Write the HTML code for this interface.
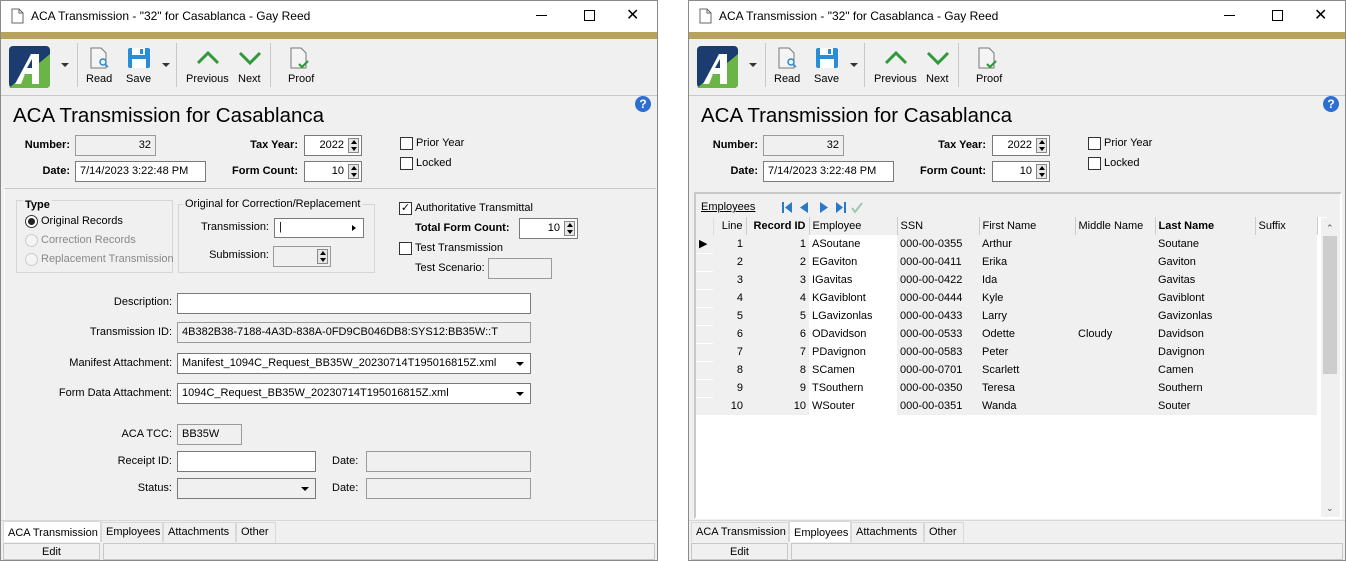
<!DOCTYPE html>
<html><head><style>
*{box-sizing:border-box;margin:0;padding:0}
body{width:1346px;height:561px;background:#fff;font-family:"Liberation Sans",sans-serif;font-size:11px;color:#000;position:relative;overflow:hidden}
.win{position:absolute;top:0;width:658px;height:561px;background:#f0f0f0;border:1px solid #8a8a8a;overflow:hidden}
.a{position:absolute;white-space:nowrap}
.title{left:0;top:0;width:656px;height:31px;background:#fff}
.gold{left:0;top:31px;width:656px;height:7px;background:#b8a35e}
.sep{width:1px;height:44px;top:42px;background:#c8c8c8}
.r{text-align:right}
.in{background:#fff;border:1px solid #7a7a7a;height:21px;padding:3px 4px}
.ro{background:#f0f0f0;border:1px solid #9a9a9a;height:21px;padding:3px 4px}
.spin{position:absolute;right:2px;top:2px;width:11px;height:15px;border:1px solid #888;background:#e6e6e6}
.spin:before{content:"";position:absolute;left:2px;top:1px;border-left:3px solid transparent;border-right:3px solid transparent;border-bottom:4px solid #000}
.spin:after{content:"";position:absolute;left:2px;bottom:1px;border-left:3px solid transparent;border-right:3px solid transparent;border-top:4px solid #000}
.cb{width:13px;height:13px;border:1px solid #333;background:#fff}
.dd:after{content:"";position:absolute;right:6px;top:8px;border-left:4px solid transparent;border-right:4px solid transparent;border-top:4px solid #000}
.tab{top:521px;height:20px;padding:3px 4px;border:1px solid #d8d8d8;border-bottom:none;background:#f0f0f0;overflow:hidden}
.grid td{height:18px;padding:0 3px;font-size:11px;white-space:nowrap;overflow:hidden}
</style></head><body>

<!-- LEFT WINDOW -->
<div class="win" style="left:0">
 <div class="a title"></div>
 <svg class="a" style="left:10px;top:7px" width="13" height="16"><path d="M1 1h7l4 4v10H1z" fill="#fff" stroke="#666"/><path d="M8 1v4h4" fill="none" stroke="#666"/></svg>
 <div class="a" style="left:30px;top:8px;font-size:12px">ACA Transmission - "32" for Casablanca - Gay Reed</div>
 <div class="a" style="left:535px;top:14px;width:11px;height:1px;background:#000"></div>
 <div class="a" style="left:583px;top:9px;width:11px;height:11px;border:1px solid #000"></div>
 <div class="a" style="left:625px;top:4px;font-size:16px">✕</div>
 <div class="a gold"></div>
 <svg class="a" style="left:8px;top:45px" width="41" height="42"><rect width="41" height="42" rx="4" fill="#1c3b6e"/><path d="M0 42 L41 8 V38 Q41 42 37 42Z" fill="#6bb548"/><path d="M6 38 L22 8 L30 8 L30 38 L23 38 L23 28 L16 28 L12 38Z M18 22 L23 22 L23 13Z" fill="#fff"/></svg>
 <div class="a" style="left:60px;top:62px;border-left:4px solid transparent;border-right:4px solid transparent;border-top:4px solid #333"></div>
 <div class="a sep" style="left:76px"></div>
 <svg class="a" style="left:89px;top:46px" width="20" height="22"><path d="M1 1h10l5 5v15H1z" fill="#f4f4f4" stroke="#777"/><circle cx="13" cy="15" r="3" fill="none" stroke="#2a8ad4" stroke-width="1.5"/><path d="M15 17l3 3" stroke="#2a8ad4" stroke-width="1.5"/></svg>
 <div class="a" style="left:85px;top:72px">Read</div>
 <svg class="a" style="left:126px;top:46px" width="24" height="22"><rect x="1" y="1" width="22" height="20" rx="2" fill="#2b8cd6"/><rect x="5" y="1" width="13" height="7" fill="#fff"/><rect x="13" y="2" width="3" height="5" fill="#2b8cd6"/><rect x="5" y="12" width="14" height="9" fill="#fff"/></svg>
 <div class="a" style="left:125px;top:72px">Save</div>
 <div class="a" style="left:161px;top:62px;border-left:4px solid transparent;border-right:4px solid transparent;border-top:4px solid #333"></div>
 <div class="a sep" style="left:175px"></div>
 <svg class="a" style="left:195px;top:50px" width="24" height="14"><path d="M2 12L12 2L22 12" fill="none" stroke="#2e9a3a" stroke-width="3"/></svg>
 <div class="a" style="left:185px;top:72px">Previous</div>
 <svg class="a" style="left:237px;top:50px" width="24" height="14"><path d="M2 2L12 12L22 2" fill="none" stroke="#2e9a3a" stroke-width="3"/></svg>
 <div class="a" style="left:237px;top:72px">Next</div>
 <div class="a sep" style="left:269px"></div>
 <svg class="a" style="left:289px;top:46px" width="22" height="24"><path d="M1 1h10l5 5v15H1z" fill="#f4f4f4" stroke="#777"/><path d="M9 17l3 3l6-6" fill="none" stroke="#2e9a3a" stroke-width="2.2"/></svg>
 <div class="a" style="left:287px;top:72px">Proof</div>
 <div class="a" style="left:0;top:94px;width:656px;height:1px;background:#c8c8c8"></div>
 <div class="a" style="left:12px;top:103px;font-size:20.5px">ACA Transmission for Casablanca</div>
 <div class="a" style="left:634px;top:95px;width:16px;height:16px;border-radius:50%;background:#2d6fd0;color:#fff;font-weight:bold;font-size:12px;text-align:center;line-height:16px">?</div>

 <div class="a r" style="left:0;width:69px;top:138px;font-weight:bold">Number:</div>
 <div class="a ro r" style="left:74px;top:134px;width:81px">32</div>
 <div class="a r" style="left:0;width:69px;top:164px;font-weight:bold">Date:</div>
 <div class="a in" style="left:74px;top:160px;width:131px">7/14/2023 3:22:48 PM</div>
 <div class="a r" style="left:200px;width:97px;top:138px;font-weight:bold">Tax Year:</div>
 <div class="a in r" style="left:303px;top:134px;width:58px;padding-right:17px">2022<div class="spin"></div></div>
 <div class="a r" style="left:200px;width:97px;top:164px;font-weight:bold">Form Count:</div>
 <div class="a in r" style="left:303px;top:160px;width:58px;padding-right:17px">10<div class="spin"></div></div>
 <div class="a cb" style="left:399px;top:136px"></div><div class="a" style="left:415px;top:136px">Prior Year</div>
 <div class="a cb" style="left:399px;top:156px"></div><div class="a" style="left:415px;top:156px">Locked</div>

 <div class="a" style="left:3px;top:187px;width:652px;height:333px;border-top:1px solid #c8c8c8;border-left:1px solid #fff"></div>
 <div class="a" style="left:15px;top:199px;width:157px;height:73px;border:1px solid #d6d6d6"></div>
 <div class="a" style="left:22px;top:198px;font-weight:bold;background:#f0f0f0;padding:0 2px">Type</div>
 <div class="a" style="left:24px;top:214px;width:13px;height:13px;border-radius:50%;border:1px solid #333;background:#fff"><div style="margin:2px;width:7px;height:7px;border-radius:50%;background:#222"></div></div>
 <div class="a" style="left:40px;top:214px">Original Records</div>
 <div class="a" style="left:24px;top:233px;width:13px;height:13px;border-radius:50%;border:1px solid #ccc;background:#f4f4f4"></div>
 <div class="a" style="left:40px;top:233px;color:#888">Correction Records</div>
 <div class="a" style="left:24px;top:252px;width:13px;height:13px;border-radius:50%;border:1px solid #ccc;background:#f4f4f4"></div>
 <div class="a" style="left:40px;top:252px;color:#888">Replacement Transmission</div>
 <div class="a" style="left:177px;top:203px;width:197px;height:69px;border:1px solid #d6d6d6"></div>
 <div class="a" style="left:182px;top:197px;background:#f0f0f0;padding:0 2px">Original for Correction/Replacement</div>
 <div class="a r" style="left:180px;width:88px;top:220px">Transmission:</div>
 <div class="a in" style="left:273px;top:217px;width:90px;height:20px;padding-top:2px">|<div style="position:absolute;right:7px;top:6px;border-top:3px solid transparent;border-bottom:3px solid transparent;border-left:4px solid #000"></div></div>
 <div class="a r" style="left:180px;width:88px;top:248px">Submission:</div>
 <div class="a ro" style="left:272px;top:245px;width:58px;height:21px"><div class="spin"></div></div>
 <div class="a cb" style="left:398px;top:201px;font-size:11px;line-height:11px;text-align:center">✓</div><div class="a" style="left:414px;top:201px">Authoritative Transmittal</div>
 <div class="a" style="left:414px;top:221px;font-weight:bold">Total Form Count:</div>
 <div class="a in r" style="left:518px;top:217px;width:59px;padding-right:17px">10<div class="spin"></div></div>
 <div class="a cb" style="left:398px;top:241px"></div><div class="a" style="left:414px;top:241px">Test Transmission</div>
 <div class="a" style="left:414px;top:261px">Test Scenario:</div>
 <div class="a ro" style="left:487px;top:257px;width:64px"></div>

 <div class="a r" style="left:0;width:171px;top:295px">Description:</div>
 <div class="a in" style="left:176px;top:292px;width:354px"></div>
 <div class="a r" style="left:0;width:171px;top:325px">Transmission ID:</div>
 <div class="a ro" style="left:176px;top:321px;width:354px">4B382B38-7188-4A3D-838A-0FD9CB046DB8:SYS12:BB35W::T</div>
 <div class="a r" style="left:0;width:171px;top:356px">Manifest Attachment:</div>
 <div class="a in dd" style="left:176px;top:352px;width:354px">Manifest_1094C_Request_BB35W_20230714T195016815Z.xml</div>
 <div class="a r" style="left:0;width:171px;top:386px">Form Data Attachment:</div>
 <div class="a in dd" style="left:176px;top:382px;width:354px">1094C_Request_BB35W_20230714T195016815Z.xml</div>
 <div class="a r" style="left:0;width:171px;top:427px">ACA TCC:</div>
 <div class="a ro" style="left:176px;top:423px;width:65px">BB35W</div>
 <div class="a r" style="left:0;width:171px;top:454px">Receipt ID:</div>
 <div class="a in" style="left:176px;top:450px;width:139px"></div>
 <div class="a" style="left:331px;top:454px">Date:</div>
 <div class="a ro" style="left:365px;top:450px;width:165px"></div>
 <div class="a r" style="left:0;width:171px;top:481px">Status:</div>
 <div class="a in dd" style="left:176px;top:477px;width:139px;background:#f0f0f0"></div>
 <div class="a" style="left:331px;top:481px">Date:</div>
 <div class="a ro" style="left:365px;top:477px;width:165px"></div>

 <div class="a" style="left:0;top:519px;width:656px;height:1px;background:#d8d8d8"></div>
 <div class="a tab" style="left:2px;width:98px;background:#fff;top:520px;height:21px;padding-top:5px">ACA Transmission</div>
 <div class="a tab" style="left:100px;width:62px">Employees</div>
 <div class="a tab" style="left:162px;width:73px">Attachments</div>
 <div class="a tab" style="left:235px;width:40px">Other</div>
 <div class="a" style="left:2px;top:542px;width:97px;height:17px;border:1px solid #c8c8c8;text-align:center;padding-top:2px">Edit</div>
 <div class="a" style="left:102px;top:542px;width:552px;height:17px;border:1px solid #c8c8c8"></div>
</div>

<!-- RIGHT WINDOW -->
<div class="win" style="left:688px">
 <div class="a title"></div>
 <svg class="a" style="left:10px;top:7px" width="13" height="16"><path d="M1 1h7l4 4v10H1z" fill="#fff" stroke="#666"/><path d="M8 1v4h4" fill="none" stroke="#666"/></svg>
 <div class="a" style="left:30px;top:8px;font-size:12px">ACA Transmission - "32" for Casablanca - Gay Reed</div>
 <div class="a" style="left:535px;top:14px;width:11px;height:1px;background:#000"></div>
 <div class="a" style="left:583px;top:9px;width:11px;height:11px;border:1px solid #000"></div>
 <div class="a" style="left:625px;top:4px;font-size:16px">✕</div>
 <div class="a gold"></div>
 <svg class="a" style="left:8px;top:45px" width="41" height="42"><rect width="41" height="42" rx="4" fill="#1c3b6e"/><path d="M0 42 L41 8 V38 Q41 42 37 42Z" fill="#6bb548"/><path d="M6 38 L22 8 L30 8 L30 38 L23 38 L23 28 L16 28 L12 38Z M18 22 L23 22 L23 13Z" fill="#fff"/></svg>
 <div class="a" style="left:60px;top:62px;border-left:4px solid transparent;border-right:4px solid transparent;border-top:4px solid #333"></div>
 <div class="a sep" style="left:76px"></div>
 <svg class="a" style="left:89px;top:46px" width="20" height="22"><path d="M1 1h10l5 5v15H1z" fill="#f4f4f4" stroke="#777"/><circle cx="13" cy="15" r="3" fill="none" stroke="#2a8ad4" stroke-width="1.5"/><path d="M15 17l3 3" stroke="#2a8ad4" stroke-width="1.5"/></svg>
 <div class="a" style="left:85px;top:72px">Read</div>
 <svg class="a" style="left:126px;top:46px" width="24" height="22"><rect x="1" y="1" width="22" height="20" rx="2" fill="#2b8cd6"/><rect x="5" y="1" width="13" height="7" fill="#fff"/><rect x="13" y="2" width="3" height="5" fill="#2b8cd6"/><rect x="5" y="12" width="14" height="9" fill="#fff"/></svg>
 <div class="a" style="left:125px;top:72px">Save</div>
 <div class="a" style="left:161px;top:62px;border-left:4px solid transparent;border-right:4px solid transparent;border-top:4px solid #333"></div>
 <div class="a sep" style="left:175px"></div>
 <svg class="a" style="left:195px;top:50px" width="24" height="14"><path d="M2 12L12 2L22 12" fill="none" stroke="#2e9a3a" stroke-width="3"/></svg>
 <div class="a" style="left:185px;top:72px">Previous</div>
 <svg class="a" style="left:237px;top:50px" width="24" height="14"><path d="M2 2L12 12L22 2" fill="none" stroke="#2e9a3a" stroke-width="3"/></svg>
 <div class="a" style="left:237px;top:72px">Next</div>
 <div class="a sep" style="left:269px"></div>
 <svg class="a" style="left:289px;top:46px" width="22" height="24"><path d="M1 1h10l5 5v15H1z" fill="#f4f4f4" stroke="#777"/><path d="M9 17l3 3l6-6" fill="none" stroke="#2e9a3a" stroke-width="2.2"/></svg>
 <div class="a" style="left:287px;top:72px">Proof</div>
 <div class="a" style="left:0;top:94px;width:656px;height:1px;background:#c8c8c8"></div>
 <div class="a" style="left:12px;top:103px;font-size:20.5px">ACA Transmission for Casablanca</div>
 <div class="a" style="left:634px;top:95px;width:16px;height:16px;border-radius:50%;background:#2d6fd0;color:#fff;font-weight:bold;font-size:12px;text-align:center;line-height:16px">?</div>

 <div class="a r" style="left:0;width:69px;top:138px;font-weight:bold">Number:</div>
 <div class="a ro r" style="left:74px;top:134px;width:81px">32</div>
 <div class="a r" style="left:0;width:69px;top:164px;font-weight:bold">Date:</div>
 <div class="a in" style="left:74px;top:160px;width:131px">7/14/2023 3:22:48 PM</div>
 <div class="a r" style="left:200px;width:97px;top:138px;font-weight:bold">Tax Year:</div>
 <div class="a in r" style="left:303px;top:134px;width:58px;padding-right:17px">2022<div class="spin"></div></div>
 <div class="a r" style="left:200px;width:97px;top:164px;font-weight:bold">Form Count:</div>
 <div class="a in r" style="left:303px;top:160px;width:58px;padding-right:17px">10<div class="spin"></div></div>
 <div class="a cb" style="left:399px;top:136px"></div><div class="a" style="left:415px;top:136px">Prior Year</div>
 <div class="a cb" style="left:399px;top:156px"></div><div class="a" style="left:415px;top:156px">Locked</div>

 <div class="a" style="left:5px;top:191px;width:648px;height:327px;border:2px solid #c8c8c8;border-right-color:#fff;border-bottom-color:#fff"></div>
 <div class="a" style="left:12px;top:200px;text-decoration:underline;text-decoration-thickness:1px">Employees</div>
 <svg class="a" style="left:92px;top:200px" width="90" height="13">
  <rect x="1" y="1" width="2" height="11" fill="#2a78c8"/><path d="M11 1L4 6.5L11 12Z" fill="#2a78c8"/>
  <path d="M27 1L19 6.5L27 12Z" fill="#2a78c8"/>
  <path d="M39 1L47 6.5L39 12Z" fill="#2a78c8"/>
  <path d="M55 1L62 6.5L55 12Z" fill="#2a78c8"/><rect x="63" y="1" width="2" height="11" fill="#2a78c8"/>
  <path d="M71 7l3 4l7-9" fill="none" stroke="#9cc8b0" stroke-width="2"/>
 </svg>
 <div class="a" style="left:7px;top:216px;width:631px;height:300px;background:#fff"></div>
 <table class="a grid" style="left:7px;top:216px;border-collapse:collapse;table-layout:fixed;width:621px">
  <colgroup><col style="width:17px"><col style="width:33px"><col style="width:63px"><col style="width:88px"><col style="width:82px"><col style="width:96px"><col style="width:80px"><col style="width:100px"><col style="width:62px"></colgroup>
  <tr style="background:#f0f0f0">
   <td style="border-right:1px solid #ddd"></td><td style="text-align:right;border-right:1px solid #ccc">Line</td><td style="text-align:right;font-weight:bold;border-right:1px solid #ccc">Record ID</td><td style="border-right:1px solid #ccc">Employee</td><td style="border-right:1px solid #ccc">SSN</td><td style="border-right:1px solid #ccc">First Name</td><td style="border-right:1px solid #ccc">Middle Name</td><td style="font-weight:bold;border-right:1px solid #ccc">Last Name</td><td style="border-right:1px solid #ccc">Suffix</td>
  </tr>
  <tbody style="background:#f0f0f0">
  <tr><td style="background:#f0f0f0;border-bottom:1px solid #fff">▶</td><td style="text-align:right">1</td><td style="text-align:right">1</td><td style="background:#fff">ASoutane</td><td>000-00-0355</td><td>Arthur</td><td></td><td>Soutane</td><td></td></tr>
  <tr><td style="border-bottom:1px solid #fff"></td><td style="text-align:right">2</td><td style="text-align:right">2</td><td style="background:#fff">EGaviton</td><td>000-00-0411</td><td>Erika</td><td></td><td>Gaviton</td><td></td></tr>
  <tr><td style="border-bottom:1px solid #fff"></td><td style="text-align:right">3</td><td style="text-align:right">3</td><td style="background:#fff">IGavitas</td><td>000-00-0422</td><td>Ida</td><td></td><td>Gavitas</td><td></td></tr>
  <tr><td style="border-bottom:1px solid #fff"></td><td style="text-align:right">4</td><td style="text-align:right">4</td><td style="background:#fff">KGaviblont</td><td>000-00-0444</td><td>Kyle</td><td></td><td>Gaviblont</td><td></td></tr>
  <tr><td style="border-bottom:1px solid #fff"></td><td style="text-align:right">5</td><td style="text-align:right">5</td><td style="background:#fff">LGavizonlas</td><td>000-00-0433</td><td>Larry</td><td></td><td>Gavizonlas</td><td></td></tr>
  <tr><td style="border-bottom:1px solid #fff"></td><td style="text-align:right">6</td><td style="text-align:right">6</td><td style="background:#fff">ODavidson</td><td>000-00-0533</td><td>Odette</td><td>Cloudy</td><td>Davidson</td><td></td></tr>
  <tr><td style="border-bottom:1px solid #fff"></td><td style="text-align:right">7</td><td style="text-align:right">7</td><td style="background:#fff">PDavignon</td><td>000-00-0583</td><td>Peter</td><td></td><td>Davignon</td><td></td></tr>
  <tr><td style="border-bottom:1px solid #fff"></td><td style="text-align:right">8</td><td style="text-align:right">8</td><td style="background:#fff">SCamen</td><td>000-00-0701</td><td>Scarlett</td><td></td><td>Camen</td><td></td></tr>
  <tr><td style="border-bottom:1px solid #fff"></td><td style="text-align:right">9</td><td style="text-align:right">9</td><td style="background:#fff">TSouthern</td><td>000-00-0350</td><td>Teresa</td><td></td><td>Southern</td><td></td></tr>
  <tr><td style="border-bottom:1px solid #fff"></td><td style="text-align:right">10</td><td style="text-align:right">10</td><td style="background:#fff">WSouter</td><td>000-00-0351</td><td>Wanda</td><td></td><td>Souter</td><td></td></tr>
  </tbody>
 </table>
 <div class="a" style="left:632px;top:217px;width:17px;height:299px;background:#f0f0f0"></div>
 <div class="a" style="left:634px;top:235px;width:14px;height:138px;background:#cdcdcd"></div>
 <div class="a" style="left:637px;top:222px;font-size:9px;color:#555">⌃</div>
 <div class="a" style="left:637px;top:502px;font-size:9px;color:#555">⌄</div>

 <div class="a" style="left:0;top:519px;width:656px;height:1px;background:#d8d8d8"></div>
 <div class="a tab" style="left:2px;width:98px">ACA Transmission</div>
 <div class="a tab" style="left:100px;width:62px;background:#fff;top:520px;height:21px;padding-top:5px">Employees</div>
 <div class="a tab" style="left:162px;width:73px">Attachments</div>
 <div class="a tab" style="left:235px;width:40px">Other</div>
 <div class="a" style="left:2px;top:542px;width:97px;height:17px;border:1px solid #c8c8c8;text-align:center;padding-top:2px">Edit</div>
 <div class="a" style="left:102px;top:542px;width:552px;height:17px;border:1px solid #c8c8c8"></div>
</div>
</body></html>
